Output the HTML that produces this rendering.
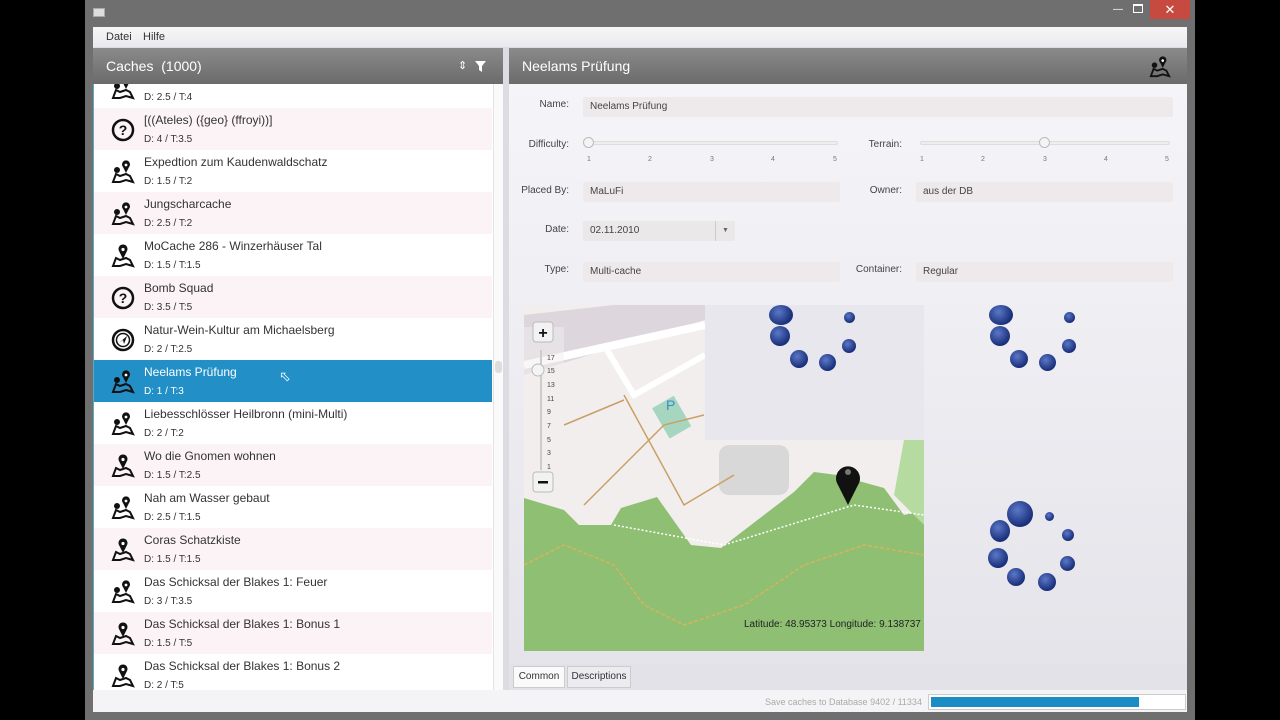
<!DOCTYPE html>
<html><head><meta charset="utf-8">
<style>
*{margin:0;padding:0;box-sizing:border-box}
body{width:1280px;height:720px;background:#000;font-family:"Liberation Sans",sans-serif;position:relative;overflow:hidden}
.abs{position:absolute}
#win{left:85px;top:0;width:1110px;height:720px;background:#6f6f6f}
.menu{left:93px;top:27px;width:1094px;height:20px;background:linear-gradient(#f7f7f9,#e9e9ee);font-size:11px;color:#333}
.hdr{height:36px;background:linear-gradient(#8a8a8a,#6b6b6b);color:#fff;font-size:14px;line-height:36px;padding-left:13px}
.list{left:93px;top:84px;width:410px;height:607px;background:#fff;overflow:hidden;border-left:1px solid #5aa9c8}
.row{position:absolute;left:0;width:398px;height:42px;font-size:12px;color:#333}
.row.p{background:#fcf3f7}
.row.sel{background:#2290c6;color:#fff}
.row .t{position:absolute;left:50px;top:5px}
.row .s{position:absolute;left:50px;top:26px;font-size:10px}
.row svg{position:absolute;left:17px;top:10px}
.right{left:509px;top:48px;width:678px;height:642px;background:#e6e6ec}
.form{left:509px;top:84px;width:678px;height:580px;background:linear-gradient(#f5f5f9,#e4e4ea)}
.lbl{font-size:10px;color:#444;text-align:right;width:60px}
.fld{height:20px;background:#eeeaeb;font-size:10px;color:#444;line-height:20px;padding-left:7px;border-radius:2px}
.tick{font-size:7px;color:#777}
.dot{position:absolute;border-radius:50%;background:radial-gradient(circle at 40% 35%,#5a78c8,#1a2f7a 70%)}
</style></head><body>
<div id="win" class="abs"></div>
<div class="abs" style="left:93px;top:8px;width:12px;height:9px;background:#ddd;border:1px solid #aaa"></div>
<div class="abs" style="left:1113px;top:4px;color:#fff;font-size:10px">&#8212;</div>
<div class="abs" style="left:1133px;top:4px;width:10px;height:9px;border:1px solid #fff;border-top-width:2px"></div>
<div class="abs" style="left:1150px;top:0;width:40px;height:19px;background:#c74a40;color:#fff;font-size:13px;text-align:center;line-height:19px">&#10005;</div>
<div class="abs menu"><span style="position:absolute;left:13px;top:4px">Datei</span><span style="position:absolute;left:50px;top:4px">Hilfe</span></div>
<div class="abs" style="left:93px;top:47px;width:1094px;height:643px;background:#dcdce2"></div>
<div class="abs hdr" style="left:93px;top:48px;width:410px">Caches&nbsp; (1000)<span style="position:absolute;left:365px;font-size:11px">&#8661;</span><svg class="abs" style="left:382px;top:13px" width="11" height="11"><path d="M0 0H11L7 5V11L4 9V5Z" fill="#fff"/></svg></div>
<div class="abs list">
<svg width="0" height="0" style="position:absolute">
<defs>
<symbol id="multi" viewBox="0 0 24 24"><path d="M2 22L5 14L9 16L15 14L19 16L22 22L15 20L9 22Z" fill="none" stroke="#111" stroke-width="2"/><circle cx="6" cy="10" r="3" fill="#111"/><path d="M15 13L12 7A4 4 0 1 1 18 7Z" fill="#111"/><circle cx="15" cy="5" r="1.4" fill="#fff"/></symbol>
<symbol id="single" viewBox="0 0 24 24"><path d="M2 22L5 14L9 16L15 14L19 16L22 22L15 20L9 22Z" fill="none" stroke="#111" stroke-width="2"/><path d="M12 15L8 7A4.5 4.5 0 1 1 16 7Z" fill="#111"/><circle cx="12" cy="5.5" r="1.6" fill="#fff"/></symbol>
<symbol id="q" viewBox="0 0 24 24"><circle cx="12" cy="12" r="10" fill="none" stroke="#111" stroke-width="2.5"/><text x="12" y="17" font-size="14" font-weight="bold" text-anchor="middle" font-family="Liberation Sans" fill="#111">?</text></symbol>
<symbol id="v" viewBox="0 0 24 24"><circle cx="12" cy="12" r="10" fill="none" stroke="#111" stroke-width="2.5"/><circle cx="12" cy="12" r="6.5" fill="none" stroke="#111" stroke-width="1.5"/><path d="M8 15L16 8L13 16L12 12Z" fill="#111"/></symbol>
</defs></svg>
<div class="row" style="top:-18px"><svg width="24" height="24"><use href="#multi"/></svg><span class="s">D: 2.5 / T:4</span></div>
<div class="row p" style="top:24px"><svg width="24" height="24"><use href="#q"/></svg><span class="t">[((Ateles) ({geo} (ffroyi))]</span><span class="s">D: 4 / T:3.5</span></div>
<div class="row" style="top:66px"><svg width="24" height="24"><use href="#multi"/></svg><span class="t">Expedtion zum Kaudenwaldschatz</span><span class="s">D: 1.5 / T:2</span></div>
<div class="row p" style="top:108px"><svg width="24" height="24"><use href="#multi"/></svg><span class="t">Jungscharcache</span><span class="s">D: 2.5 / T:2</span></div>
<div class="row" style="top:150px"><svg width="24" height="24"><use href="#single"/></svg><span class="t">MoCache 286 - Winzerhäuser Tal</span><span class="s">D: 1.5 / T:1.5</span></div>
<div class="row p" style="top:192px"><svg width="24" height="24"><use href="#q"/></svg><span class="t">Bomb Squad</span><span class="s">D: 3.5 / T:5</span></div>
<div class="row" style="top:234px"><svg width="24" height="24"><use href="#v"/></svg><span class="t">Natur-Wein-Kultur am Michaelsberg</span><span class="s">D: 2 / T:2.5</span></div>
<div class="row sel" style="top:276px"><svg width="24" height="24"><use href="#multi"/></svg><span class="t">Neelams Prüfung</span><span class="s">D: 1 / T:3</span><span style="position:absolute;left:185px;top:8px;font-size:14px;color:#fff">&#11009;</span></div>
<div class="row" style="top:318px"><svg width="24" height="24"><use href="#multi"/></svg><span class="t">Liebesschlösser Heilbronn (mini-Multi)</span><span class="s">D: 2 / T:2</span></div>
<div class="row p" style="top:360px"><svg width="24" height="24"><use href="#single"/></svg><span class="t">Wo die Gnomen wohnen</span><span class="s">D: 1.5 / T:2.5</span></div>
<div class="row" style="top:402px"><svg width="24" height="24"><use href="#multi"/></svg><span class="t">Nah am Wasser gebaut</span><span class="s">D: 2.5 / T:1.5</span></div>
<div class="row p" style="top:444px"><svg width="24" height="24"><use href="#single"/></svg><span class="t">Coras Schatzkiste</span><span class="s">D: 1.5 / T:1.5</span></div>
<div class="row" style="top:486px"><svg width="24" height="24"><use href="#multi"/></svg><span class="t">Das Schicksal der Blakes 1: Feuer</span><span class="s">D: 3 / T:3.5</span></div>
<div class="row p" style="top:528px"><svg width="24" height="24"><use href="#single"/></svg><span class="t">Das Schicksal der Blakes 1: Bonus 1</span><span class="s">D: 1.5 / T:5</span></div>
<div class="row" style="top:570px"><svg width="24" height="24"><use href="#single"/></svg><span class="t">Das Schicksal der Blakes 1: Bonus 2</span><span class="s">D: 2 / T:5</span></div>
<div style="position:absolute;left:399px;top:0;width:10px;height:607px;background:#fafafa;border-left:1px solid #e4e4e4"><div style="position:absolute;left:1px;top:277px;width:7px;height:12px;background:#ddd;border-radius:3px"></div></div>
</div>
<div class="abs right"></div>
<div class="abs hdr" style="left:509px;top:48px;width:678px">Neelams Prüfung<svg class="abs" style="left:640px;top:8px" width="22" height="22"><use href="#multi"/></svg></div>
<div class="abs form"></div>
<div class="abs lbl" style="left:509px;top:99px">Name:</div>
<div class="abs fld" style="left:583px;top:97px;width:590px">Neelams Prüfung</div>
<div class="abs lbl" style="left:509px;top:139px">Difficulty:</div>
<div class="abs" style="left:588px;top:141px;width:250px;height:4px;background:#eee;border:1px solid #ddd;border-radius:2px"></div>
<div class="abs" style="left:583px;top:137px;width:11px;height:11px;border-radius:50%;background:#f4f4f4;border:1px solid #bbb"></div>
<div class="abs lbl" style="left:842px;top:139px">Terrain:</div>
<div class="abs" style="left:920px;top:141px;width:250px;height:4px;background:#eee;border:1px solid #ddd;border-radius:2px"></div>
<div class="abs" style="left:1039px;top:137px;width:11px;height:11px;border-radius:50%;background:#f4f4f4;border:1px solid #bbb"></div>
<div class="abs tick" style="left:587px;top:156px">1</div><div class="abs tick" style="left:648px;top:156px">2</div><div class="abs tick" style="left:710px;top:156px">3</div><div class="abs tick" style="left:771px;top:156px">4</div><div class="abs tick" style="left:833px;top:156px">5</div>
<div class="abs tick" style="left:920px;top:156px">1</div><div class="abs tick" style="left:981px;top:156px">2</div><div class="abs tick" style="left:1043px;top:156px">3</div><div class="abs tick" style="left:1104px;top:156px">4</div><div class="abs tick" style="left:1165px;top:156px">5</div>
<div class="abs lbl" style="left:509px;top:185px">Placed By:</div>
<div class="abs fld" style="left:583px;top:182px;width:257px">MaLuFi</div>
<div class="abs lbl" style="left:842px;top:185px">Owner:</div>
<div class="abs fld" style="left:916px;top:182px;width:257px">aus der DB</div>
<div class="abs lbl" style="left:509px;top:224px">Date:</div>
<div class="abs fld" style="left:583px;top:221px;width:152px;background:#ebe8ea">02.11.2010<span style="position:absolute;left:132px;top:0;border-left:1px solid #ccc;padding-left:6px;font-size:7px;color:#666">&#9660;</span></div>
<div class="abs lbl" style="left:509px;top:264px">Type:</div>
<div class="abs fld" style="left:583px;top:262px;width:257px">Multi-cache</div>
<div class="abs lbl" style="left:842px;top:264px">Container:</div>
<div class="abs fld" style="left:916px;top:262px;width:257px">Regular</div>
<!-- map -->
<svg class="abs" style="left:524px;top:305px" width="400" height="346">
<rect x="0" y="0" width="181" height="135" fill="#f2eeee"/>
<rect x="0" y="135" width="400" height="211" fill="#f2eeee"/>
<path d="M0 10L90 0H181V15L0 70Z" fill="#ddd6dc"/>
<path d="M0 60L181 20" stroke="#fff" stroke-width="8" fill="none"/>
<path d="M80 40L110 90L181 50" stroke="#fff" stroke-width="6" fill="none"/>
<rect x="135" y="95" width="25" height="35" fill="#a6d6c0" transform="rotate(-30 147 112)"/>
<text x="142" y="105" font-size="14" fill="#3a8ec6" font-family="Liberation Sans">P</text>
<rect x="195" y="140" width="70" height="50" fill="#d8d8d8" rx="10"/>
<path d="M40 120L100 95M60 200L140 120L180 110M100 90L160 200L210 170" stroke="#c9a064" stroke-width="1.5" fill="none"/>
<path d="M0 193L40 205L55 220L87 220L97 203L133 192L167 240L197 243L270 187L290 167L313 170L360 183L380 210L400 205V346H0Z" fill="#8fbf73"/>
<path d="M380 135L400 135V220L370 190Z" fill="#b5dba0"/>
<path d="M0 260L40 240L90 260L120 300L160 320L220 300L280 260L340 240L400 250" stroke="#d7b35c" stroke-width="1.5" fill="none" stroke-dasharray="4 2"/>
<path d="M90 220L200 240L330 200L400 210" stroke="#fff" stroke-width="1.5" fill="none" stroke-dasharray="2 2"/>
<rect x="181" y="0" width="219" height="135" fill="#e7e7ed"/>
<rect x="0" y="22" width="40" height="170" fill="rgba(242,238,238,.5)"/>
<rect x="9" y="17" width="20" height="20" rx="3" fill="#f2f2f2" stroke="#bbb"/>
<text x="19" y="33" font-size="16" text-anchor="middle" font-weight="bold" fill="#111">+</text>
<rect x="9" y="167" width="20" height="20" rx="3" fill="#f2f2f2" stroke="#bbb"/>
<rect x="14" y="176" width="10" height="2.5" fill="#111"/>
<line x1="17" y1="45" x2="17" y2="165" stroke="#ccc" stroke-width="2"/>
<circle cx="14" cy="65" r="6" fill="#f4f4f4" stroke="#bbb"/>
<g font-size="7" fill="#444" font-family="Liberation Sans"><text x="23" y="55">17</text><text x="23" y="68">15</text><text x="23" y="82">13</text><text x="23" y="96">11</text><text x="23" y="109">9</text><text x="23" y="123">7</text><text x="23" y="137">5</text><text x="23" y="150">3</text><text x="23" y="164">1</text></g>
<path d="M324 200L314 180A12 12 0 1 1 334 180Z" fill="#111"/><circle cx="324" cy="167" r="3" fill="#777"/>
<text x="220" y="322" font-size="10" fill="#222" font-family="Liberation Sans">Latitude: 48.95373 Longitude: 9.138737</text>
</svg>
<!-- spinners -->
<div class="abs" style="left:765px;top:305px;width:100px;height:70px">
<div class="dot" style="left:4px;top:0;width:24px;height:20px"></div><div class="dot" style="left:5px;top:21px;width:20px;height:20px"></div><div class="dot" style="left:25px;top:45px;width:18px;height:18px"></div><div class="dot" style="left:54px;top:49px;width:17px;height:17px"></div><div class="dot" style="left:77px;top:34px;width:14px;height:14px"></div><div class="dot" style="left:79px;top:7px;width:11px;height:11px"></div></div>
<div class="abs" style="left:985px;top:305px;width:100px;height:70px">
<div class="dot" style="left:4px;top:0;width:24px;height:20px"></div><div class="dot" style="left:5px;top:21px;width:20px;height:20px"></div><div class="dot" style="left:25px;top:45px;width:18px;height:18px"></div><div class="dot" style="left:54px;top:49px;width:17px;height:17px"></div><div class="dot" style="left:77px;top:34px;width:14px;height:14px"></div><div class="dot" style="left:79px;top:7px;width:11px;height:11px"></div></div>
<div class="abs" style="left:985px;top:498px;width:100px;height:95px">
<div class="dot" style="left:22px;top:3px;width:26px;height:26px"></div><div class="dot" style="left:5px;top:22px;width:20px;height:22px"></div><div class="dot" style="left:3px;top:50px;width:20px;height:20px"></div><div class="dot" style="left:22px;top:70px;width:18px;height:18px"></div><div class="dot" style="left:53px;top:75px;width:18px;height:18px"></div><div class="dot" style="left:75px;top:58px;width:15px;height:15px"></div><div class="dot" style="left:77px;top:31px;width:12px;height:12px"></div><div class="dot" style="left:60px;top:14px;width:9px;height:9px"></div></div>
<!-- tabs -->
<div class="abs" style="left:509px;top:664px;width:678px;height:26px;background:#e2e2e8"></div>
<div class="abs" style="left:513px;top:666px;width:52px;height:22px;background:#fafafa;border:1px solid #ccc;font-size:10px;color:#333;line-height:20px;text-align:center">Common</div>
<div class="abs" style="left:567px;top:666px;width:64px;height:22px;background:#ececf0;border:1px solid #ccc;font-size:10px;color:#333;line-height:20px;text-align:center">Descriptions</div>
<div class="abs" style="left:93px;top:690px;width:1094px;height:22px;background:#f4f4f6"></div>
<div class="abs" style="left:765px;top:697px;font-size:9px;color:#aaa">Save caches to Database 9402 / 11334</div>
<div class="abs" style="left:928px;top:694px;width:258px;height:16px;background:#fff;border:1px solid #ccc"></div>
<div class="abs" style="left:931px;top:697px;width:208px;height:10px;background:#1b8dc4"></div>
</body></html>
